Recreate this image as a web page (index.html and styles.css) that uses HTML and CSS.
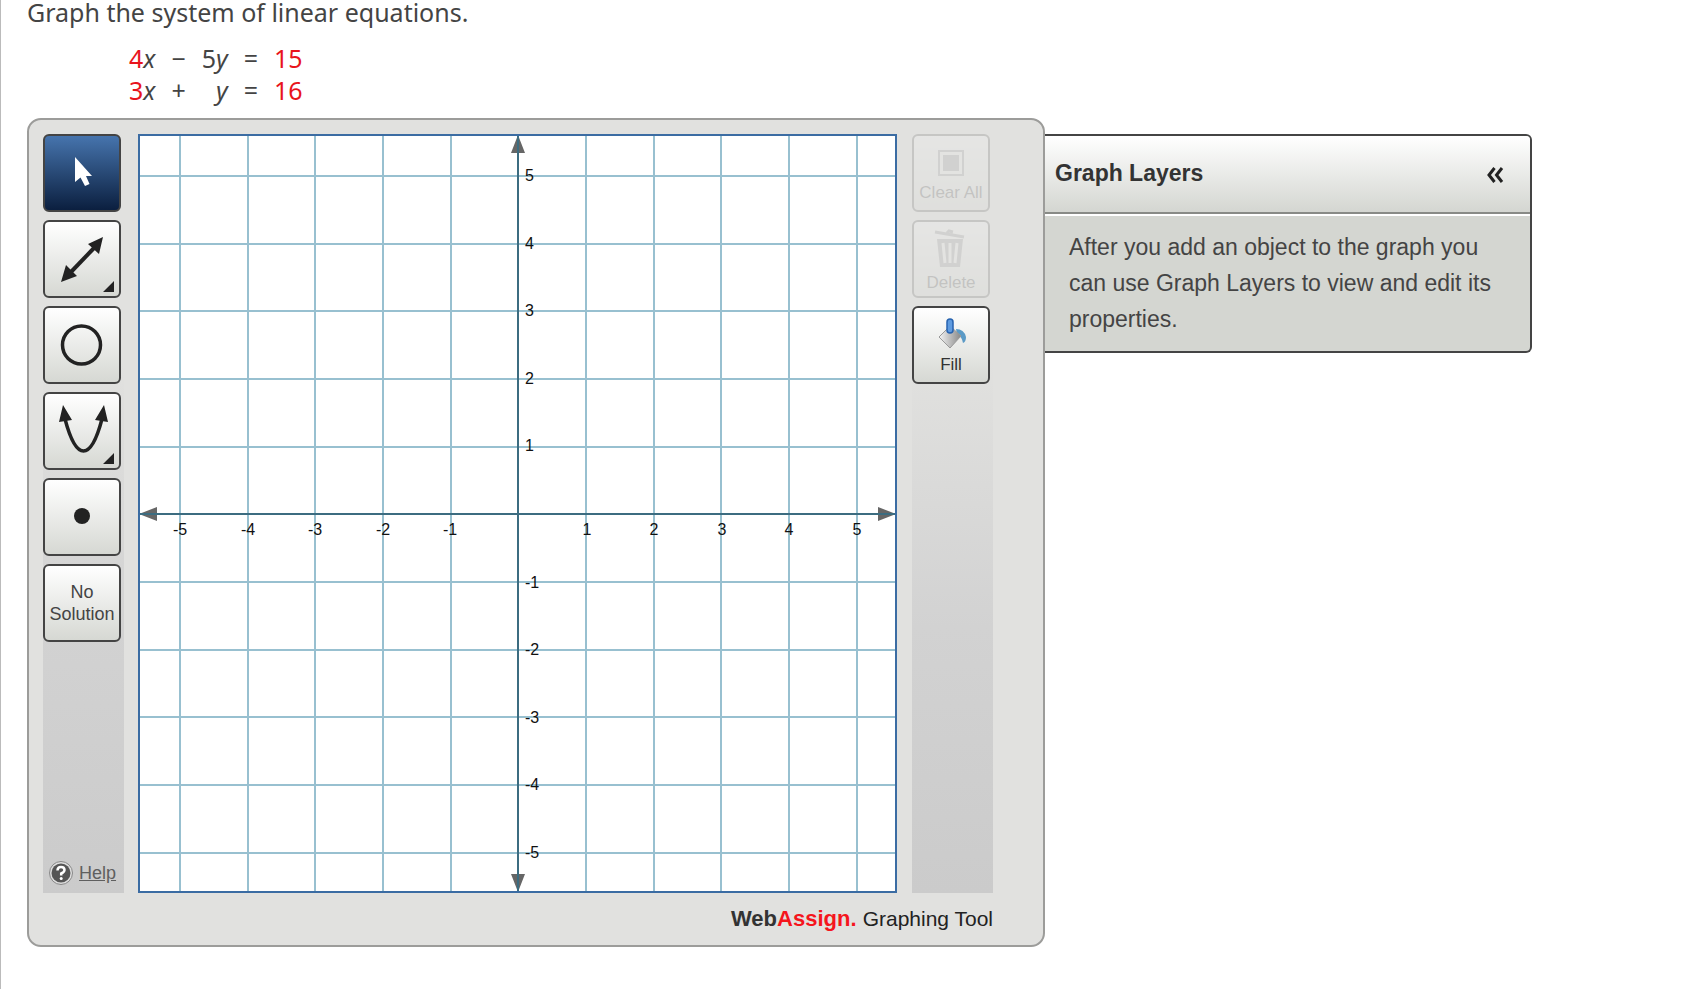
FILE: index.html
```html
<!DOCTYPE html>
<html lang="en">
<head>
<meta charset="utf-8">
<title>Graph the system of linear equations</title>
<link rel="stylesheet" href="styles.css">
</head>
<body>
<main class="question">
  <p class="prompt">Graph the system of linear equations.</p>
  <table class="system">
    <tr><td><b>4</b><i>x</i></td><td>−</td><td>5<i>y</i></td><td>=</td><td><b>15</b></td></tr>
    <tr><td><b>3</b><i>x</i></td><td>+</td><td><i>y</i></td><td>=</td><td><b>16</b></td></tr>
  </table>

  <div class="workspace">
    <section class="tool" aria-label="Graphing Tool">
      <div class="board">
        <div class="strip">
          <button class="btn btn-active" type="button" aria-label="Select">
            <svg viewBox="2 2 74 74"><path d="M32 23V48L37.500 43.500L42 52L46.500 50L43 42H49Z" fill="#fff"/></svg>
          </button>
          <button class="btn" type="button" aria-label="Line">
            <svg viewBox="2 2 74 74"><path d="M27 53L52 27" stroke="#222" stroke-width="4"/><path d="M60 17L45 24L56 34ZM18 62L23 45L34 56ZM60 72H71V61Z" fill="#222"/></svg>
          </button>
          <button class="btn" type="button" aria-label="Circle">
            <svg viewBox="2 2 74 74"><circle cx="38.500" cy="39" r="19" fill="none" stroke="#222" stroke-width="3.500"/></svg>
          </button>
          <button class="btn" type="button" aria-label="Parabola">
            <svg viewBox="2 2 74 74"><path d="M22 27C27 46 33 59 40.500 59S54 46 59 27" fill="none" stroke="#222" stroke-width="3.500"/><path d="M20 13L16 30L29 28ZM61 13L52 28L65 30ZM60 72H71V61Z" fill="#222"/></svg>
          </button>
          <button class="btn" type="button" aria-label="Point">
            <svg viewBox="2 2 74 74"><circle cx="39" cy="38" r="8" fill="#222"/></svg>
          </button>
          <button class="btn btn-text" type="button">No Solution</button>
          <a class="help" href="#help">
            <svg viewBox="0 0 26 26"><circle cx="13" cy="13" r="11.500" fill="#ddd" stroke="#888"/><circle cx="13" cy="13" r="9.500" fill="#555"/><path d="M9.500 10.500Q9.500 7 13 7T16.500 10Q16.500 12 13.200 13.500V15.500" fill="none" stroke="#fff" stroke-width="2.500"/><circle cx="13.200" cy="18.500" r="1.500" fill="#fff"/></svg>
            <span>Help</span>
          </a>
        </div>

        <svg class="graph" viewBox="0 0 759 759" role="img" aria-label="Coordinate grid">
          <rect x="1" y="1" width="757" height="757" fill="#fff"/>
          <path class="grid" d="M42 0V759M110 0V759M177 0V759M245 0V759M313 0V759M448 0V759M516 0V759M583 0V759M651 0V759M719 0V759M0 42H759M0 110H759M0 177H759M0 245H759M0 313H759M0 448H759M0 516H759M0 583H759M0 651H759M0 719H759"/>
          <path class="arrows" d="M380 1L373 19H387ZM380 758L373 740H387ZM1 380L19 373V387ZM758 380L740 373V387Z"/>
          <path class="axes" d="M380 0V759M0 380H759"/>
          <rect class="edge" x="1" y="1" width="757" height="757"/>
          <g class="nums nums-x">
            <text x="42" y="401">-5</text><text x="110" y="401">-4</text><text x="177" y="401">-3</text><text x="245" y="401">-2</text><text x="312" y="401">-1</text>
            <text x="449" y="401">1</text><text x="516" y="401">2</text><text x="584" y="401">3</text><text x="651" y="401">4</text><text x="719" y="401">5</text>
          </g>
          <g class="nums">
            <text x="387" y="47">5</text><text x="387" y="115">4</text><text x="387" y="182">3</text><text x="387" y="250">2</text><text x="387" y="317">1</text>
            <text x="387" y="454">-1</text><text x="387" y="521">-2</text><text x="387" y="589">-3</text><text x="387" y="656">-4</text><text x="387" y="724">-5</text>
          </g>
        </svg>

        <div class="strip">
          <button class="btn btn-action" type="button" disabled>
            <svg viewBox="2 2 74 46"><rect x="27" y="17" width="24" height="24" fill="#eee" stroke="#888" stroke-width="2"/><rect x="31" y="21" width="16" height="16" fill="#888"/></svg>
            <span>Clear All</span>
          </button>
          <button class="btn btn-action" type="button" disabled>
            <svg viewBox="2 2 74 50"><path d="M23 12L52 17M35 13L37 11L41 12" fill="none" stroke="#888" stroke-width="3"/><path d="M25 19H51L48 47H28Z" fill="#888"/><path d="M31 23L33 43M38 23V43M45 23L43 43" stroke="#eee" stroke-width="3"/></svg>
            <span>Delete</span>
          </button>
          <button class="btn btn-action" type="button">
            <svg viewBox="2 2 74 46"><defs><linearGradient id="pail"><stop offset="0" stop-color="#f4f4f4"/><stop offset="1" stop-color="#888"/></linearGradient></defs><path d="M44 23Q52 23 54 31Q54 36 51 37Q50 31 45 28Z" fill="#5b9ac6"/><path d="M27 31L38 20L49 30L38 42Z" fill="url(#pail)" stroke="#999"/><rect x="35" y="13" width="6" height="14" rx="3" fill="#5e9be0" stroke="#2763b0" stroke-width="1.500"/></svg>
            <span>Fill</span>
          </button>
        </div>
      </div>
      <footer class="brand"><strong>Web<em>Assign.</em></strong> <span>Graphing Tool</span></footer>
    </section>

    <aside class="layers">
      <header class="layers-head">
        <h2>Graph Layers</h2>
        <button class="collapse" type="button" aria-label="Collapse"><svg viewBox="0 0 18 16"><path d="M8.500 1L3 8L8.500 15M16 1L10.500 8L16 15" fill="none" stroke="#222" stroke-width="3"/></svg></button>
      </header>
      <p>After you add an object to the graph you can use Graph Layers to view and edit its properties.</p>
    </aside>
  </div>
</main>
</body>
</html>
```
FILE: styles.css
```css
* { box-sizing: border-box; }
body {
  margin: 0;
  background: #fff;
  color: #444;
  font-family: "Liberation Sans", Arial, sans-serif;
}
.question {
  min-height: 100vh;
  padding-left: 26px;
  border-left: 1px solid #bbb;
}
.prompt {
  margin: 0;
  font: 25px/24px "Noto Sans", Verdana, sans-serif;
}
.system {
  margin: 18px 0 12px 102px;
  border-collapse: collapse;
  font: 25px/32px "Noto Sans", Verdana, sans-serif;
}
.system td { padding: 0 16px 0 0; text-align: right; }
.system b { font-weight: 400; color: #e8141c; }

.workspace {
  display: grid;
  grid-template-columns: minmax(0, 1018fr) minmax(0, 487fr);
  align-items: start;
  padding-right: 170px;
}
.tool {
  padding: 14px 50px 14px 14px;
  border: 2px solid #9c9c9a;
  border-radius: 14px;
  background: #e1e1df;
}
.board { display: flex; }
.strip {
  display: flex;
  flex: 0 0 81px;
  flex-direction: column;
  align-items: flex-start;
  gap: 8px;
  background: linear-gradient(#e1e1df 30%, #d2d2d2 65%, #cbcbcb);
}
.graph { flex: 1; min-width: 0; margin: 0 15px 0 14px; }
.grid { fill: none; stroke: #98c0d0; stroke-width: 2; }
.axes { fill: none; stroke: #3c6c80; stroke-width: 2; }
.arrows { fill: #666; }
.edge { fill: none; stroke: #3b6ca3; stroke-width: 2; }
.nums { font-size: 16px; fill: #111; }
.nums-x { text-anchor: middle; }

.btn {
  display: flex;
  flex-direction: column;
  align-items: center;
  justify-content: center;
  width: 78px;
  height: 78px;
  padding: 0;
  border: 2px solid #444;
  border-radius: 6px;
  background: linear-gradient(#fff, #d6d8d3);
  color: #333;
  font: 17px/22px "Liberation Sans", Arial, sans-serif;
}
.btn svg { display: block; width: 100%; }
.btn-active { background: linear-gradient(#4674ad, #0b1f3f); }
.btn-text { color: #444; font-size: 18px; }
.btn-action { justify-content: flex-start; }
.btn-action span { white-space: nowrap; }
.btn:disabled { opacity: .17; }

.help {
  display: flex;
  align-items: center;
  gap: 5px;
  margin: auto 0 7px 5px;
  color: #5f5f5f;
  font-size: 18px;
}
.help svg { width: 26px; height: 26px; }

.brand {
  padding-top: 13px;
  margin-bottom: -1px;
  color: #333;
  font-size: 22px;
  line-height: 26px;
  text-align: right;
}
.brand em { color: #f5151d; font-style: normal; }
.brand span { color: #222; font-size: 21px; }

.layers {
  margin-top: 16px;
  border: solid #444;
  border-width: 2px 2px 2px 0;
  border-radius: 0 6px 6px 0;
  background: #d4d6d1;
}
.layers-head {
  display: flex;
  align-items: center;
  justify-content: space-between;
  height: 78px;
  padding: 0 26px 2px 10px;
  border-bottom: 2px solid #888a86;
  border-radius: 0 4px 0 0;
  background: linear-gradient(#fff, #d4d6d1);
}
.layers h2 { margin: 0; color: #333; font-size: 23px; line-height: 28px; }
.collapse { padding: 4px 0 0; border: 0; background: none; }
.collapse svg { display: block; width: 18px; height: 16px; }
.layers p {
  margin: 0;
  padding: 13px 32px 14px 24px;
  border-top: 2px solid #fff;
  font-size: 23px;
  line-height: 36px;
}
```
